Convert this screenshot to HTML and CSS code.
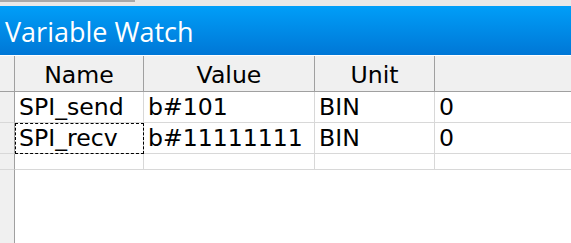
FILE: index.html
```html
<!DOCTYPE html>
<html lang="en">
<head>
  <meta charset="UTF-8" />
  <title>Variable Watch</title>
  <link rel="stylesheet" href="styles.css">
</head>
<body>
  <div class="topstrip"><div class="tabline"></div></div>
  <div class="titlebar">Variable Watch</div>

  <div class="watch">
    <div class="hd corner"></div>
    <div class="hd">Name</div>
    <div class="hd">Value</div>
    <div class="hd">Unit</div>
    <div class="hd last"></div>

    <div class="rh"></div>
    <div class="cell">SPI_send</div>
    <div class="cell">b#101</div>
    <div class="cell">BIN</div>
    <div class="cell last">0</div>

    <div class="rh"></div>
    <div class="cell focus">SPI_recv</div>
    <div class="cell">b#11111111</div>
    <div class="cell">BIN</div>
    <div class="cell last">0</div>

    <div class="rh short"></div>
    <div class="cell short"></div>
    <div class="cell short"></div>
    <div class="cell short"></div>
    <div class="cell short last"></div>

    <div class="rh fill"></div>
    <div class="blank"></div>
  </div>
</body>
</html>
```

FILE: styles.css
```css
html, body {
  margin: 0;
  height: 100%;
  overflow: hidden;
  background: #fff;
}
body {
  display: flex;
  flex-direction: column;
  font-family: "DejaVu Sans", sans-serif;
}
.topstrip {
  height: 6px;
  background: #e8e8e8;
}
.tabline {
  width: 135px;
  height: 2px;
  background: #a8a8a8;
}
.titlebar {
  height: 49px;
  line-height: 52px;
  padding-left: 5px;
  color: #fff;
  font-family: "Open Sans", sans-serif;
  font-size: 27px;
  background: linear-gradient(#009ef8, #0077d6);
  border-bottom: 1px solid #fff;
}
.watch {
  flex: 1;
  display: grid;
  grid-template-columns: 15px 129px 171px 120px 1fr;
  grid-template-rows: 36px 31px 31px 16px 1fr;
  font-size: 23.6px;
  color: #000;
}
.hd {
  background: #f0f0f0;
  border-right: 1px solid #a0a0a0;
  border-bottom: 1px solid #a0a0a0;
  text-align: center;
  line-height: 38px;
}
.cell {
  border-right: 1px solid #d8d8d8;
  border-bottom: 1px solid #d8d8d8;
  padding-left: 4px;
  line-height: 31px;
}
.last {
  border-right: none;
}
.rh {
  background: #f0f0f0;
  border-right: 1px solid #a0a0a0;
  border-bottom: 1px solid #d8d8d8;
}
.rh.fill {
  border-bottom: none;
}
.blank {
  grid-column: 2 / 6;
}
.focus {
  outline: 1px dashed #000;
  outline-offset: -1px;
}
```
